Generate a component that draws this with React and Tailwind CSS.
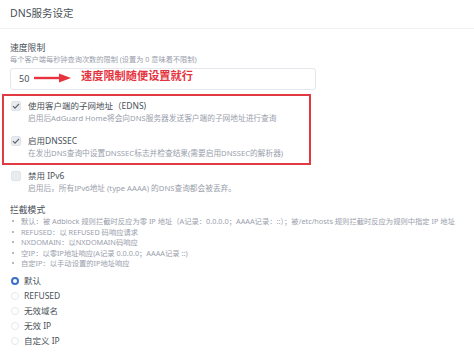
import React from 'react';

const font = { fontFamily: '"Noto Sans", "Noto Sans CJK SC", sans-serif' };

const Check = ({ checked }) => (
    <div className="w-[10px] h-[10px] rounded-[2px] bg-[#e9ecef] border border-[#dfe3e8] flex items-center justify-center shrink-0">
        {checked && (
            <svg width="8" height="8" viewBox="0 0 8 8">
                <path d="M1 4.2 L3 6.2 L7 1.8" fill="none" stroke="#5b6570" strokeWidth="1.2" />
            </svg>
        )}
    </div>
);

const CheckRow = ({ checked, label, desc }) => (
    <div>
        <div className="flex items-center gap-[7px]">
            <Check checked={checked} />
            <span className="text-[8.5px] leading-[12px] text-[#495057]">{label}</span>
        </div>
        <div className="pl-[17px] mt-[1px] text-[7.7px] leading-[10px] text-[#9aa0ac] whitespace-nowrap">{desc}</div>
    </div>
);

const bullets = [
    '默认：被 Adblock 规则拦截时反应为零 IP 地址（A记录：0.0.0.0；AAAA记录：::）；被/etc/hosts 规则拦截时反应为规则中指定 IP 地址',
    'REFUSED：以 REFUSED 码响应请求',
    'NXDOMAIN：以NXDOMAIN码响应',
    '空IP：以零IP地址响应(A记录 0.0.0.0；AAAA记录 ::)',
    '自定IP：以手动设置的IP地址响应',
];

const radios = ['默认', 'REFUSED', '无效域名', '无效 IP', '自定义 IP'];

export default function App() {
    return (
        <div className="w-[474px] h-[354px] overflow-hidden bg-white" style={font}>
            <div className="h-[29px] border-b border-[#eef0f3] px-[10px] flex items-center text-[10.5px] text-[#495057]">
                DNS服务设定
            </div>

            <div className="px-[10px] pt-[13px]">
                <div className="text-[8.8px] leading-[12px] text-[#495057]">速度限制</div>
                <div className="text-[7.2px] leading-[10px] text-[#9aa0ac] whitespace-nowrap">
                    每个客户端每秒钟查询次数的限制 (设置为 0 意味着不限制)
                </div>

                <div className="relative mt-[4px] w-[306px] h-[22px] border border-[#e4e7eb] rounded-[3px] flex items-center pl-[8px] text-[9px] text-[#495057]">
                    50
                    <svg className="absolute left-[23px] top-[4px]" width="38" height="10" viewBox="0 0 38 10">
                        <line x1="0" y1="5" x2="27" y2="5" stroke="#e5343d" strokeWidth="2.4" />
                        <path d="M25 0.5 L37 5 L25 9.5 Z" fill="#e5343d" />
                    </svg>
                    <span className="absolute left-[70px] top-[0px] text-[11.2px] leading-[14px] font-bold text-[#e5343d] whitespace-nowrap">
                        速度限制随便设置就行
                    </span>
                </div>

                <div className="-ml-[8px] mt-[4px] w-[309px] h-[71px] border-2 border-[#e13a42] pl-[7px] pt-[4px]">
                    <CheckRow checked label="使用客户端的子网地址（EDNS)" desc="启用后AdGuard Home将会向DNS服务器发送客户端的子网地址进行查询" />
                    <div className="mt-[12px]">
                        <CheckRow checked label="启用DNSSEC" desc="在发出DNS查询中设置DNSSEC标志并检查结果(需要启用DNSSEC的解析器)" />
                    </div>
                </div>

                <div className="mt-[5px] pl-[1px]">
                    <CheckRow label="禁用 IPv6" desc="启用后，所有IPv6地址 (type AAAA) 的DNS查询都会被丢弃。" />
                </div>

                <div className="mt-[11px] text-[8.8px] leading-[12px] text-[#495057]">拦截模式</div>
                <ul>
                    {bullets.map((b) => (
                        <li key={b} className="flex items-center text-[7.3px] leading-[10.5px] text-[#9aa0ac] whitespace-nowrap">
                            <span className="w-[2px] h-[2px] rounded-full bg-[#9aa0ac] ml-[2px] mr-[7px] shrink-0"></span>
                            {b}
                        </li>
                    ))}
                </ul>

                <div className="mt-[5px]">
                    {radios.map((r, i) => (
                        <div key={r} className="h-[15px] flex items-center pl-[1px] gap-[5px]">
                            {i === 0 ? (
                                <div className="w-[8px] h-[8px] rounded-full border-[2.5px] border-[#3b6fc7] bg-white"></div>
                            ) : (
                                <div className="w-[8px] h-[8px] rounded-full border border-[#e3e7ec] bg-white"></div>
                            )}
                            <span className="text-[8.5px] text-[#495057]">{r}</span>
                        </div>
                    ))}
                </div>
            </div>
        </div>
    );
}
